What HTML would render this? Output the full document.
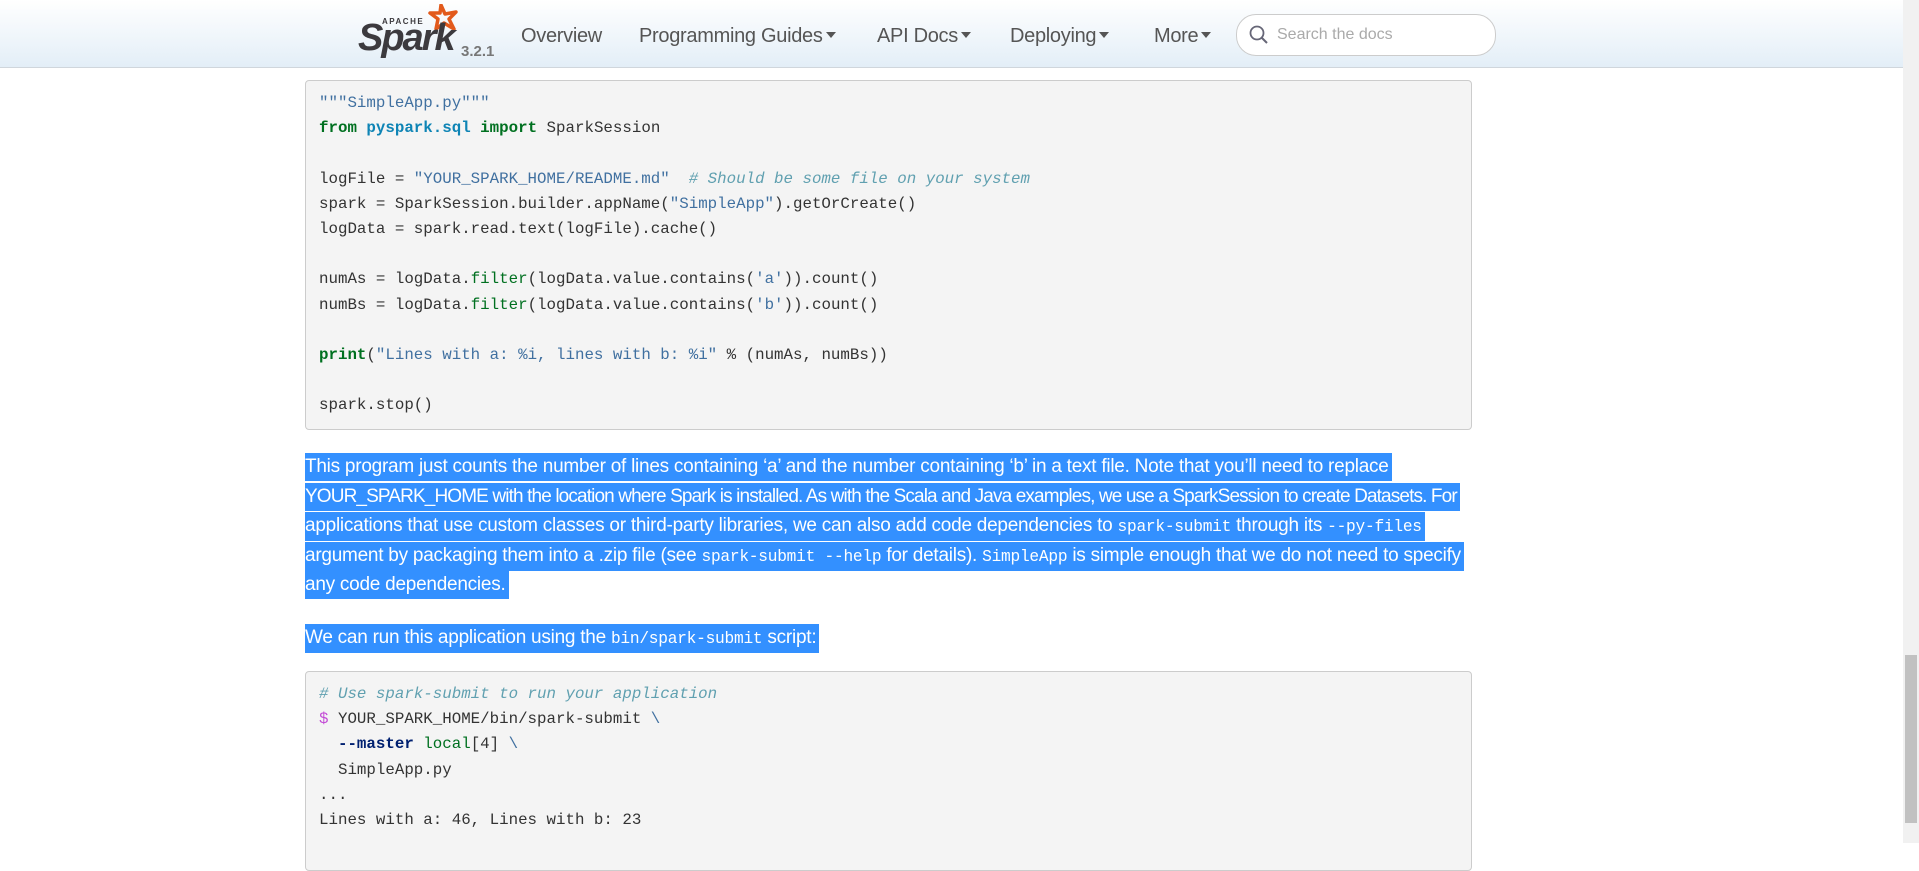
<!DOCTYPE html>
<html><head><meta charset="utf-8">
<style>
html,body{margin:0;padding:0;}
body{width:1919px;height:843px;overflow:hidden;position:relative;background:#fff;font-family:"Liberation Sans",sans-serif;}
.nav{position:absolute;left:0;top:0;width:1903px;height:67px;background:linear-gradient(#fff,#e3eef7);border-bottom:1px solid #d0d6dc;}
.nav .item{position:absolute;top:25px;font-size:20px;color:#555;letter-spacing:-0.3px;}
.caret{display:inline-block;width:0;height:0;border-left:5px solid transparent;border-right:5px solid transparent;border-top:6px solid #555;vertical-align:middle;margin-left:3px;margin-top:-4px;}
.search{position:absolute;left:1236px;top:14px;width:258px;height:40px;border:1px solid #ccc;border-radius:20px;background:#fff;}
.search span{position:absolute;left:40px;top:11px;font-size:16px;color:#aaa;}
.sb{position:absolute;left:1903px;top:0;width:16px;height:843px;background:#f1f1f1;}
.thumb{position:absolute;left:1905px;top:655px;width:12px;height:168px;background:#c1c1c1;}
pre{position:absolute;left:305px;width:1167px;margin:0;background:#f4f4f4;border:1px solid #ccc;border-radius:4px;font-family:"Liberation Mono",monospace;font-size:15.8px;line-height:25.2px;color:#333;padding:10px 0 0 13px;box-sizing:border-box;white-space:pre;}
.s{color:#4070a0}.k{color:#007020;font-weight:bold}.n{color:#0e84b5;font-weight:bold}.c{color:#60a0b0;font-style:italic}.b{color:#007020}
.para{position:absolute;left:305px;font-size:19px;color:#fff;letter-spacing:-0.25px;}
.para div{height:29.6px;}
.para span{background:#3390ff;display:inline-block;line-height:28px;white-space:nowrap;padding-right:3px}
code{font-family:"Liberation Mono",monospace;font-size:16.2px;}
</style></head><body>
<div class="nav">
<svg style="position:absolute;left:428px;top:4px" width="34" height="28" viewBox="0 0 34 28"><path d="M13 1 L17 10 L28 8 L21 15 L26 25 L16 19 L8 25 L10 15 L2 9 L12 9 Z" fill="none" stroke="#e25a1c" stroke-width="3.5" stroke-linejoin="round"/></svg>
<div style="position:absolute;left:382px;top:17px;font-size:8px;font-weight:bold;color:#3c3a3e;letter-spacing:1.5px">APACHE</div>
<div style="position:absolute;left:358px;top:17px;font-size:38px;font-weight:bold;font-style:italic;color:#3c3a3e;letter-spacing:-2px">Spark</div>
<div style="position:absolute;left:461px;top:43px;font-size:15px;font-weight:bold;color:#777">3.2.1</div>
<div class="item" style="left:521px">Overview</div>
<div class="item" style="left:639px">Programming Guides<span class="caret"></span></div>
<div class="item" style="left:877px">API Docs<span class="caret"></span></div>
<div class="item" style="left:1010px">Deploying<span class="caret"></span></div>
<div class="item" style="left:1154px">More<span class="caret"></span></div>
<div class="search"><svg style="position:absolute;left:11px;top:9px" width="22" height="22" viewBox="0 0 22 22"><circle cx="9" cy="9" r="6.5" fill="none" stroke="#667" stroke-width="1.8"/><path d="M14 14 L19 19" stroke="#667" stroke-width="2"/></svg><span>Search the docs</span></div>
</div>
<div class="sb"></div><div class="thumb"></div>
<pre style="top:80px;height:350px"><span class="s">"""SimpleApp.py"""</span>
<span class="k">from</span> <span class="n">pyspark.sql</span> <span class="k">import</span> SparkSession

logFile = <span class="s">"YOUR_SPARK_HOME/README.md"</span>  <span class="c"># Should be some file on your system</span>
spark = SparkSession.builder.appName(<span class="s">"SimpleApp"</span>).getOrCreate()
logData = spark.read.text(logFile).cache()

numAs = logData.<span class="b">filter</span>(logData.value.contains(<span class="s">'a'</span>)).count()
numBs = logData.<span class="b">filter</span>(logData.value.contains(<span class="s">'b'</span>)).count()

<span class="k">print</span>(<span class="s">"Lines with a: %i, lines with b: %i"</span> % (numAs, numBs))

spark.stop()</pre>
<div class="para" style="top:453px">
<div><span>This program just counts the number of lines containing ‘a’ and the number containing ‘b’ in a text file. Note that you’ll need to replace</span></div>
<div><span style="letter-spacing:-0.87px">YOUR_SPARK_HOME with the location where Spark is installed. As with the Scala and Java examples, we use a SparkSession to create Datasets. For</span></div>
<div><span>applications that use custom classes or third-party libraries, we can also add code dependencies to <code>spark-submit</code> through its <code>--py-files</code></span></div>
<div><span>argument by packaging them into a .zip file (see <code>spark-submit --help</code> for details). <code>SimpleApp</code> is simple enough that we do not need to specify</span></div>
<div><span>any code dependencies.</span></div>
</div>
<div class="para" style="top:624px"><div><span>We can run this application using the <code>bin/spark-submit</code> script:</span></div></div>
<pre style="top:671px;height:200px"><span class="c"># Use spark-submit to run your application</span>
<span style="color:#c34cd6">$</span> YOUR_SPARK_HOME/bin/spark-submit <span class="s">\</span>
  <span style="color:#002070;font-weight:bold">--master</span> <span class="b">local</span>[4] <span class="s">\</span>
  SimpleApp.py
...
Lines with a: 46, Lines with b: 23</pre>
</body></html>
